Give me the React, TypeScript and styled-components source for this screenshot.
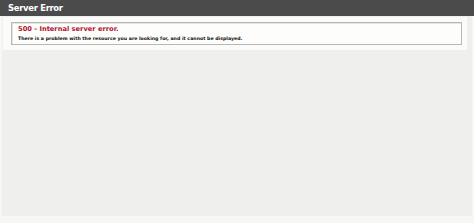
import React from "react";
import styled, { createGlobalStyle } from "styled-components";

const Global = createGlobalStyle`
  html, body { margin: 0; padding: 0; }
  body { background: #f7f7f6; font-family: "DejaVu Sans", Verdana, sans-serif; }
`;

const Page = styled.div`
  width: 474px;
  height: 223px;
  display: flex;
  flex-direction: column;
  background: #f7f7f6;
`;

const Header = styled.header`
  height: 16px;
  flex: none;
  background: #4b4b4b;
  display: flex;
  align-items: center;
  padding: 0 8px;
`;

const Title = styled.h1`
  margin: 0;
  color: #ffffff;
  font-family: "DejaVu Sans Condensed", "DejaVu Sans", sans-serif;
  font-size: 9.4px;
  font-weight: 700;
  letter-spacing: -0.3px;
  line-height: 1;
`;

const Main = styled.main`
  flex: 1;
  margin: 0 2px 7px 2px;
  background: #efefee;
  padding-top: 1px;
`;

const Container = styled.div`
  margin-left: 1px;
  width: 464px;
  background: #fbfbfa;
  padding: 5px 0 5px 8px;
  box-sizing: border-box;
`;

const Fieldset = styled.fieldset`
  margin: 0;
  width: 451px;
  height: 23px;
  box-sizing: border-box;
  border: 1px solid #b8b8b6;
  box-shadow: inset 1px 1px 0 #e4e4e2;
  background: #fdfdfc;
  padding: 2px 6px 0 6px;
`;

const Heading = styled.h2`
  margin: 0;
  color: #b01530;
  font-size: 6.7px;
  font-weight: 700;
  line-height: 9px;
`;

const Message = styled.h3`
  margin: 2px 0 0 0;
  color: #111;
  font-size: 4.7px;
  font-weight: 700;
  line-height: 6px;
`;

export default function App() {
  return (
    <>
      <Global />
      <Page>
        <Header>
          <Title>Server Error</Title>
        </Header>
        <Main>
          <Container>
            <Fieldset>
              <Heading>500 - Internal server error.</Heading>
              <Message>
                There is a problem with the resource you are looking for, and it cannot be displayed.
              </Message>
            </Fieldset>
          </Container>
        </Main>
      </Page>
    </>
  );
}
